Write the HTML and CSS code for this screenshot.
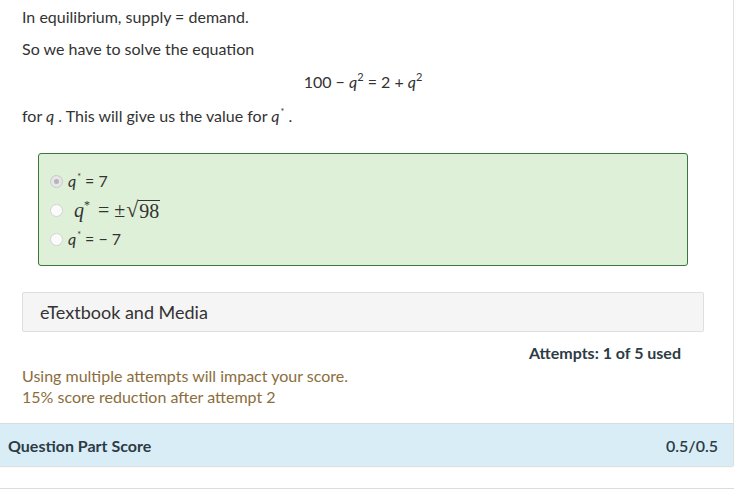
FILE: index.html
```html
<!DOCTYPE html>
<html>
<head>
<meta charset="utf-8">
<link rel="stylesheet" href="styles.css">
</head>
<body>
<div class="panel">
  <div class="content">
    <p class="para">In equilibrium, supply = demand.</p>
    <p class="para">So we have to solve the equation</p>
    <div class="equation">100 − <i>q</i><sup>2</sup> = 2 + <i>q</i><sup>2</sup></div>
    <p class="para last">for <i>q</i> . This will give us the value for <i>q</i><sup class="star">*</sup> .</p>

    <div class="answers">
      <div class="option">
        <span class="radio checked"></span>
        <span class="opt-text"><i>q</i><sup class="star">*</sup> = 7</span>
      </div>
      <div class="option">
        <span class="radio"></span>
        <span class="opt-text serif"><i>q</i><sup class="sstar">*</sup> = ±<span class="sqrt"><span class="rad">√</span><span class="radicand">98</span></span></span>
      </div>
      <div class="option">
        <span class="radio"></span>
        <span class="opt-text"><i>q</i><sup class="star">*</sup> = − 7</span>
      </div>
    </div>

    <div class="media">eTextbook and Media</div>

    <div class="attempts">Attempts: 1 of 5 used</div>
    <div class="warning">
      <div>Using multiple attempts will impact your score.</div>
      <div>15% score reduction after attempt 2</div>
    </div>
  </div>
  <div class="score-bar">
    <span class="score-label">Question Part Score</span>
    <span class="score-value">0.5/0.5</span>
  </div>
</div>
<div class="divider"></div>
</body>
</html>
```

FILE: styles.css
```css
html, body {
  margin: 0;
  padding: 0;
  background: #ffffff;
}
body {
  font-family: Lato, "Open Sans", sans-serif;
  font-size: 16px;
  color: #333333;
}
.panel {
  width: 733px;
  border-right: 1px solid #e2e2e2;
}
.content {
  padding: 7px 29px 0 22px;
}
.para {
  margin: 0 0 12px 0;
  line-height: 20px;
}
.para.last {
  margin-bottom: 0;
}
i {
  font-style: italic;
}
sup {
  font-size: 11px;
  line-height: 0;
  vertical-align: 7px;
}
.star {
  font-size: 9px;
  margin-left: 1px;
  margin-right: 0;
}
.equation {
  text-align: center;
  line-height: 20px;
  margin: 13px 0 14px 0;
}
.answers {
  margin: 27px 16px 0 16px;
  background: #dff0d8;
  border: 1px solid #3c763d;
  border-radius: 3px;
  padding: 16px 11px 15px 11px;
  display: flex;
  flex-direction: column;
  gap: 7px;
}
.option {
  display: flex;
  align-items: center;
  height: 22px;
  gap: 5px;
}
.radio {
  width: 11px;
  height: 11px;
  border-radius: 50%;
  border: 1px solid #d0d6d0;
  background: #fbfbfb;
  box-sizing: content-box;
  display: inline-block;
  position: relative;
  flex: none;
}
.radio.checked {
  background: #e6e6e6;
  border-color: #c8c8c8;
}
.radio.checked::after {
  content: "";
  position: absolute;
  left: 3px;
  top: 3px;
  width: 5px;
  height: 5px;
  border-radius: 50%;
  background: #b5b5b5;
}
.opt-text {
  line-height: 22px;
}
.serif {
  font-family: "Liberation Serif", "DejaVu Serif", serif;
  font-size: 20px;
  padding-left: 6px;
}
.sstar {
  font-size: 12px;
  vertical-align: 8px;
  margin-left: 0;
  margin-right: 3px;
}
.sqrt {
  display: inline-flex;
  align-items: flex-end;
  margin-left: 1px;
}
.rad {
  font-size: 22px;
  line-height: 22px;
}
.radicand {
  border-top: 1px solid #333333;
  line-height: 20px;
  padding: 0 1px;
}
.media {
  margin-top: 26px;
  height: 38px;
  border: 1px solid #dedede;
  border-radius: 2px;
  background: #f5f5f5;
  font-size: 18px;
  line-height: 38px;
  padding-left: 17px;
  color: #333333;
}
.attempts {
  margin-top: 11px;
  text-align: right;
  padding-right: 23px;
  font-weight: 700;
  line-height: 20px;
  color: #2d3b45;
}
.warning {
  margin-top: 2px;
  color: #8b6d3c;
  line-height: 21px;
}
.score-bar {
  margin-top: 16px;
  height: 42px;
  background: #d9edf7;
  border-top: 1px solid #d4dde2;
  box-shadow: 0 1px 1px rgba(0, 0, 0, 0.12);
  display: flex;
  justify-content: space-between;
  align-items: center;
  padding: 0 15px 0 8px;
  font-weight: 700;
  color: #2d3b45;
}
.score-value {
  font-weight: 600;
}
.divider {
  margin-top: 22px;
  width: 734px;
  height: 1px;
  background: #dcdcdc;
}
```
